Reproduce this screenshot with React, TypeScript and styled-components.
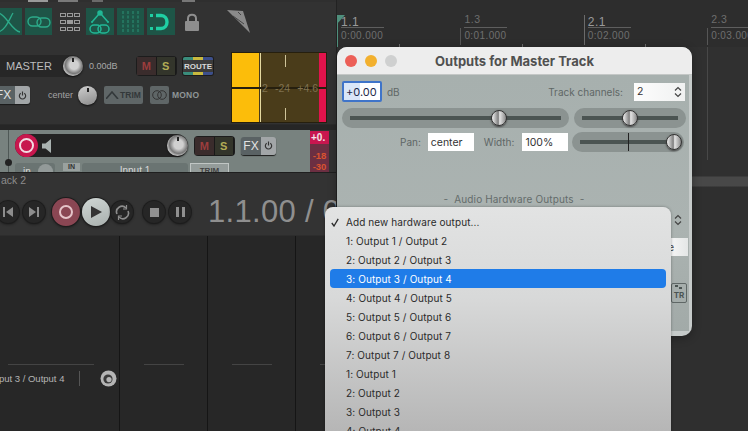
import * as React from "react";
import styled, { createGlobalStyle } from "styled-components";

const Global = createGlobalStyle`
	html, body {
		margin: 0;
		padding: 0;
		background: #2f2f2f;
	}
	* {
		box-sizing: border-box;
	}
`;

const Page = styled.div`
	position: relative;
	width: 748px;
	height: 431px;
	overflow: hidden;
	display: grid;
	grid-template-columns: 337px 1fr;
	background: #2f2f2f;
	font-family: "Liberation Sans", Arial, sans-serif;
`;

const LeftPane = styled.div`
	display: flex;
	flex-direction: column;
	height: 431px;
	overflow: hidden;
	border-right: 1px solid #222;
`;

/* ---------- toolbar ---------- */

const TopStrip = styled.div`
	display: flex;
	height: 2px;
`;

const StripBit = styled.div<{ $w: number; $ml: number; $c: string }>`
	width: ${({ $w }) => $w}px;
	margin-left: ${({ $ml }) => $ml}px;
	background: ${({ $c }) => $c};
`;

const Toolbar = styled.div`
	display: flex;
	align-items: center;
	height: 45px;
	padding: 6px 0 12px;
	background: #323232;
	margin-left: -5px;
	gap: 3px;
`;

const ToolButton = styled.div<{ $active?: boolean; $ml?: number; $w?: number }>`
	width: ${({ $w }) => $w ?? 27}px;
	height: 27px;
	flex: none;
	margin-left: ${({ $ml }) => $ml ?? 0}px;
	display: flex;
	align-items: center;
	justify-content: center;
	background: ${({ $active }) => ($active ? "#1e5547" : "transparent")};
`;

const IconLink = () => (
	<svg width="24" height="14" viewBox="0 0 24 14" fill="none" stroke="#2dab8a" strokeWidth="1.4">
		<rect x="1" y="2" width="13" height="9" rx="4.5" />
		<rect x="10" y="3" width="13" height="9" rx="4.5" />
	</svg>
);

const IconCross = () => (
	<svg width="24" height="24" viewBox="0 0 24 24" fill="none" stroke="#2dab8a" strokeWidth="1.3">
		<path d="M1 3C8 3 15 21 23 22M1 22C8 21 12 10 16 3" />
	</svg>
);

const IconDots = () => (
	<svg width="20" height="18" viewBox="0 0 20 18" fill="none" stroke="#9a9a9a" strokeWidth="1">
		{[0, 7, 14].map((x) =>
			[0, 7, 14].map((y) => (
				<rect
					key={`${x}-${y}`}
					x={x + 0.5}
					y={y + 0.5}
					width="5"
					height="3"
					fill={x === 7 && y === 7 ? "#9a9a9a" : "none"}
				/>
			))
		)}
	</svg>
);

const IconRoute = () => (
	<svg width="24" height="26" viewBox="0 0 24 26" fill="none" stroke="#22b896" strokeWidth="1.5">
		<circle cx="12" cy="4" r="2" fill="#22b896" />
		<path d="M11 5L4 13M13 5L20 13" />
		<rect x="2" y="16" width="11" height="8" rx="4" />
		<rect x="10" y="16" width="11" height="8" rx="4" />
		<path d="M3 13h2M19 13h2" />
	</svg>
);

const IconLines = () => (
	<svg width="20" height="22" viewBox="0 0 20 22" fill="none" stroke="#2a9377" strokeWidth="1" strokeDasharray="3 1.5">
		<path d="M2 0V22M7 0V22M12 0V22M17 0V22" />
	</svg>
);

const IconMagnet = () => (
	<svg width="22" height="20" viewBox="0 0 22 20" fill="none">
		<path d="M6 3.5H11C19 3.5 19 16.5 11 16.5H6" stroke="#1fd0a4" strokeWidth="3.4" />
		<rect x="0" y="2" width="3" height="3" fill="#1fd0a4" />
		<rect x="0" y="15" width="3" height="3" fill="#1fd0a4" />
	</svg>
);

const IconLock = () => (
	<svg width="16" height="18" viewBox="0 0 16 18" fill="none">
		<path d="M4 8V5.5C4 0.5 12 0.5 12 5.5V8" stroke="#8e8e8e" strokeWidth="2" />
		<rect x="1" y="8" width="14" height="10" rx="1" fill="#8e8e8e" />
	</svg>
);

const IconPennant = () => (
	<svg width="24" height="24" viewBox="0 0 24 24">
		<path d="M0 0L16 1L23 23Z" fill="#8a8a8a" />
		<path d="M11 2L14 5M6 6L17 14" stroke="#444" strokeWidth="1" />
	</svg>
);

/* ---------- master panel ---------- */

const MasterPanel = styled.div`
	display: flex;
	height: 78px;
	background: #323232;
	border-bottom: 1px solid #2a2a2a;
`;

const MasterControls = styled.div`
	flex: none;
	width: 231px;
	display: flex;
	flex-direction: column;
	gap: 7px;
	padding-top: 8px;
`;

const ControlRow = styled.div`
	display: flex;
	align-items: center;
	height: 22px;
`;

const NamePill = styled.div`
	flex: none;
	width: 83px;
	height: 22px;
	padding-left: 6px;
	display: flex;
	align-items: center;
	gap: 11px;
	border-radius: 0 11px 11px 0;
	background: #272727;
	color: #bdbdbd;
	font-size: 11px;
`;

const Knob = styled.div<{ $size: number; $dark?: boolean }>`
	flex: none;
	position: relative;
	width: ${({ $size }) => $size}px;
	height: ${({ $size }) => $size}px;
	border-radius: 50%;
	background: ${({ $dark }) =>
		$dark
			? "radial-gradient(circle at 55% 45%, #d0d0d0 0 28%, #787878 55%, #e8e8e8 78%, #222 82%)"
			: "linear-gradient(160deg, #cfcfcf, #8a8a8a)"};
	box-shadow: 0 1px 2px #111;
	&::after {
		content: "";
		position: absolute;
		top: 2px;
		left: 50%;
		width: 2px;
		height: 4px;
		margin-left: -1px;
		background: #222;
	}
`;

const DbLabel = styled.span`
	flex: none;
	width: 28px;
	margin-left: 6px;
	color: #a8a8a8;
	font-size: 9px;
`;

const MuteSolo = styled.div<{ $ml: number }>`
	display: flex;
	flex: none;
	height: 18px;
	margin-left: ${({ $ml }) => $ml}px;
	border-radius: 3px;
	box-shadow: 0 0 0 1px #1c1c1c;
`;

const MuteKey = styled.div<{ $c: string; $bg: string }>`
	width: 19.5px;
	display: flex;
	align-items: center;
	justify-content: center;
	background: ${({ $bg }) => $bg};
	color: ${({ $c }) => $c};
	font-size: 11px;
	font-weight: bold;
	border-right: 1px solid #191919;
`;

const RouteButton = styled.div`
	position: relative;
	flex: none;
	width: 30px;
	height: 18px;
	margin-left: 7px;
	display: flex;
	align-items: center;
	justify-content: center;
	background: linear-gradient(90deg, #3a8d7c 0 33%, #c9b93f 33% 66%, #3c4f8c 66%);
	border-radius: 2px;
	box-shadow: 0 0 0 1px #1c1c1c;
	color: #d8d8d8;
	font-size: 8px;
	font-weight: bold;
	&::before {
		content: "";
		position: absolute;
		left: 0;
		right: 0;
		top: 3px;
		bottom: 3px;
		background: #3b3b3b;
	}
	span {
		position: relative;
	}
`;

const FxGroup = styled.div<{ $ml?: number; $w: number }>`
	flex: none;
	display: flex;
	width: ${({ $w }) => $w}px;
	height: 18px;
	margin-left: ${({ $ml }) => $ml ?? 0}px;
	border-radius: 3px;
	overflow: hidden;
	box-shadow: 0 1px 1px #1a1a1a;
`;

const FxLabel = styled.div`
	flex: 1;
	display: flex;
	align-items: center;
	justify-content: center;
	background: #5a6264;
	color: #e2e2e2;
	font-size: 12px;
`;

const FxPower = styled.div`
	width: 15px;
	display: flex;
	align-items: center;
	justify-content: center;
	background: #a2a6a8;
`;

const IconPower = () => (
	<svg width="9" height="9" viewBox="0 0 10 10" fill="none" stroke="#333" strokeWidth="1.3">
		<path d="M3 2.5A3.5 3.5 0 1 0 7 2.5M5 0.5V5" />
	</svg>
);

const CenterLabel = styled.span`
	flex: none;
	width: 30px;
	margin-left: 18px;
	color: #a4a4a4;
	font-size: 9px;
`;

const TrimButton = styled.div<{ $ml: number }>`
	flex: none;
	width: 39px;
	height: 18px;
	margin-left: ${({ $ml }) => $ml}px;
	display: flex;
	align-items: center;
	justify-content: center;
	gap: 1px;
	background: #5f6667;
	color: #33383a;
	font-size: 8.5px;
	font-weight: bold;
	border-radius: 2px;
`;

const IconTrimPeak = () => (
	<svg width="13" height="8" viewBox="0 0 13 8" fill="none" stroke="#33383a" strokeWidth="1.6">
		<path d="M0 8L6 1L12 8" />
	</svg>
);

const MonoButton = styled.div`
	flex: none;
	width: 19px;
	height: 18px;
	margin-left: 7px;
	display: flex;
	align-items: center;
	justify-content: center;
	background: #5f6667;
	border-radius: 2px;
`;

const IconMono = () => (
	<svg width="15" height="10" viewBox="0 0 15 10" fill="none" stroke="#333" strokeWidth="1">
		<circle cx="5" cy="5" r="4.3" />
		<circle cx="10" cy="5" r="4.3" />
	</svg>
);

const MonoLabel = styled.span`
	margin-left: 3px;
	color: #8f9697;
	font-size: 8.5px;
	font-weight: bold;
	letter-spacing: 0.2px;
`;

const MasterMeter = styled.div`
	position: relative;
	flex: none;
	width: 96px;
	height: 71px;
	margin-top: 5px;
	border: 1px solid #261f0e;
	background: #4a3c1a;
	display: flex;
	flex-direction: column;
	gap: 1px;
`;

const MeterChannel = styled.div`
	flex: 1;
	background: linear-gradient(
		90deg,
		#fcbd0a 0 27px,
		#4a3c1a 27px 28px,
		#e5d9a0 28px 29px,
		#4a3c1a 29px 87px,
		#e2134c 87px 94px
	);
`;

const MeterScale = styled.div`
	position: absolute;
	left: 27px;
	right: 8px;
	top: 29px;
	height: 12px;
	display: flex;
	justify-content: space-between;
	align-items: center;
	padding: 0 0 0 3px;
	color: #7f7150;
	font-size: 10.5px;
	&::before {
		content: "";
		position: absolute;
		left: -27px;
		right: -8px;
		top: 5px;
		height: 2px;
		background: #261f0e;
	}
	span {
		position: relative;
	}
`;

const MeterTick = styled.div<{ $top: boolean }>`
	position: absolute;
	left: 53px;
	width: 1px;
	height: 12px;
	background: #cfc49a;
	${({ $top }) => ($top ? "top: 2px;" : "bottom: 2px;")}
`;

const PanelGap = styled.div`
	height: 5px;
	background: #262626;
`;

/* ---------- track panel ---------- */

const TrackPanel = styled.div`
	position: relative;
	display: flex;
	height: 42px;
	flex: none;
	overflow: hidden;
	background: #323232;
`;

const TrackBody = styled.div`
	flex: none;
	width: 310px;
	padding: 4px 0 0 15px;
	background: linear-gradient(90deg, #78827f 0 8px, #4f5856 8px 9px, #78827f 9px);
	display: flex;
	flex-direction: column;
	gap: 6px;
`;

const TrackRow = styled.div`
	display: flex;
	align-items: center;
	height: 23px;
	flex: none;
`;

const ArmPill = styled.div`
	flex: none;
	width: 173px;
	height: 23px;
	display: flex;
	align-items: center;
	border-radius: 12px;
	background: #232323;
`;

const ArmButton = styled.div`
	flex: none;
	width: 23px;
	height: 23px;
	display: flex;
	align-items: center;
	justify-content: center;
	border-radius: 50%;
	background: #c8174e;
	&::after {
		content: "";
		width: 11px;
		height: 11px;
		border-radius: 50%;
		border: 2px solid #f2dce2;
	}
`;

const SpeakerSlot = styled.div`
	flex: 1;
	padding-left: 4px;
	display: flex;
	align-items: center;
`;

const IconSpeaker = () => (
	<svg width="10" height="14" viewBox="0 0 10 14">
		<path d="M0 4.5H3.5L9 0V14L3.5 9.5H0Z" fill="#a9b2b0" />
	</svg>
);

const InputRow = styled.div`
	display: flex;
	height: 20px;
	flex: none;
	align-items: flex-start;
`;

const InputSelect = styled.div<{ $w: number; $ml?: number }>`
	flex: none;
	position: relative;
	width: ${({ $w }) => $w}px;
	height: 20px;
	margin-left: ${({ $ml }) => $ml ?? 0}px;
	padding: 3px 16px 0 0;
	text-align: center;
	border-radius: 3px;
	background: #6a7472;
	color: #d7d7d7;
	font-size: 10px;
	&::after {
		content: "";
		position: absolute;
		right: 2px;
		top: 1px;
		width: 15px;
		height: 15px;
		border-radius: 50%;
		background: #939a99;
	}
`;

const InTag = styled.div`
	flex: none;
	width: 17px;
	height: 8px;
	margin: 0 0 0 8px;
	background: #99a19f;
	color: #333;
	font-size: 7px;
	font-weight: bold;
	line-height: 8px;
	text-align: center;
`;

const InputName = styled.div`
	flex: none;
	margin-left: 2px;
	height: 20px;
	width: 106px;
	background: #6a7472;
	color: #d7d7d7;
	font-size: 10px;
	text-align: center;
	padding-top: 2px;
	border-radius: 3px;
`;

const TrackTrim = styled.div`
	flex: none;
	width: 39px;
	height: 20px;
	margin-left: 2px;
	background: #949c9a;
	border: 1px solid #c0c6c4;
	color: #444;
	font-size: 8px;
	font-weight: bold;
	padding-top: 2px;
	text-align: center;
`;

const TrackDot = styled.div`
	position: absolute;
	left: 5px;
	top: 29px;
	width: 7px;
	height: 7px;
	border-radius: 50%;
	background: #222;
`;

const TrackMeter = styled.div`
	flex: none;
	width: 19px;
	margin-top: 1px;
	background: #6c2f42;
	display: flex;
	flex-direction: column;
	align-items: center;
	font-size: 9.5px;
	font-weight: bold;
	color: #d9532f;
	overflow: hidden;
	span {
		height: 11px;
		line-height: 11px;
	}
`;

const MeterPeak = styled.div`
	align-self: stretch;
	height: 13px;
	padding-left: 1px;
	background: #c8164f;
	color: #f4e4e8;
	font-size: 10px;
	line-height: 14px;
	margin-bottom: 6px;
	white-space: nowrap;
`;

/* ---------- transport ---------- */

const Transport = styled.div`
	flex: none;
	height: 63px;
	border-top: 1px solid #1f1f1f;
	background: #333;
`;

const TrackCaption = styled.div`
	height: 14px;
	padding-left: 1px;
	color: #8c8c8c;
	font-size: 10.5px;
	line-height: 14px;
`;

const TransportRow = styled.div`
	display: flex;
	align-items: center;
	height: 34px;
	margin: 8px 0 0 -3px;
	white-space: nowrap;
`;

const RoundButton = styled.div<{
	$size: number;
	$ml?: number;
	$bg: string;
}>`
	flex: none;
	width: ${({ $size }) => $size}px;
	height: ${({ $size }) => $size}px;
	margin-left: ${({ $ml }) => $ml ?? 0}px;
	display: flex;
	align-items: center;
	justify-content: center;
	border-radius: 50%;
	background: ${({ $bg }) => $bg};
	box-shadow: 0 0 0 1px #1d1d1d, 0 1px 3px #111;
`;

const RecRing = styled.div`
	width: 14px;
	height: 14px;
	border-radius: 50%;
	border: 2px solid #e5c4c9;
`;

const Clock = styled.div`
	flex: none;
	margin-left: 17px;
	color: #8f8f8f;
	font-size: 31px;
	letter-spacing: 0.3px;
`;

const PrevIcon = () => (
	<svg width="10" height="10" viewBox="0 0 10 10" fill="#8d8d8d">
		<rect x="0" y="0" width="2" height="10" />
		<path d="M10 0V10L3 5Z" />
	</svg>
);

const NextIcon = () => (
	<svg width="10" height="10" viewBox="0 0 10 10" fill="#8d8d8d">
		<rect x="8" y="0" width="2" height="10" />
		<path d="M0 0V10L7 5Z" />
	</svg>
);

const PlayIcon = () => (
	<svg width="11" height="12" viewBox="0 0 11 12" fill="#333">
		<path d="M0 0L11 6L0 12Z" />
	</svg>
);

const RepeatIcon = () => (
	<svg width="15" height="15" viewBox="0 0 15 15" fill="none" stroke="#8d8d8d" strokeWidth="1.6">
		<path d="M2 9A5.5 5.5 0 0 1 11 3M13 6A5.5 5.5 0 0 1 4 12" />
		<path d="M11.5 0V4H8M3.5 15V11H7" strokeWidth="1.2" />
	</svg>
);

const StopIcon = () => (
	<svg width="9" height="9" viewBox="0 0 9 9">
		<rect width="9" height="9" fill="#909090" />
	</svg>
);

const PauseIcon = () => (
	<svg width="9" height="10" viewBox="0 0 9 10" fill="#909090">
		<rect width="3" height="10" />
		<rect x="6" width="3" height="10" />
	</svg>
);

/* ---------- mixer ---------- */

const Mixer = styled.div`
	flex: 1;
	display: flex;
	background: #272727;
	border-top: 1px solid #2d2d2d;
`;

const Strip = styled.div<{ $w: number; $inset: number; $lineW: number }>`
	flex: none;
	width: ${({ $w }) => $w}px;
	padding: 128px 0 0 ${({ $inset }) => $inset}px;
	border-right: 1px solid #151515;
	&::before {
		content: "";
		display: block;
		width: ${({ $lineW }) => $lineW}px;
		height: 1px;
		background: #444;
	}
`;

const StripFooter = styled.div`
	display: flex;
	align-items: center;
	height: 27px;
	margin-left: -17px;
	white-space: nowrap;
	color: #b4b4b4;
	font-size: 9.5px;
`;

const StripDivider = styled.div`
	flex: none;
	width: 1px;
	height: 15px;
	margin-left: 15px;
	background: #555;
`;

const RingIcon = styled.svg`
	flex: none;
	margin-left: 20px;
`;

/* ---------- ruler & arrange ---------- */

const RightPane = styled.div`
	display: flex;
	flex-direction: column;
	height: 431px;
	background: #2f2f2f;
`;

const Ruler = styled.div`
	display: flex;
	flex: none;
	height: 47px;
	background: #2d2d2d;
`;

const RulerCell = styled.div<{ $major: boolean }>`
	position: relative;
	flex: none;
	width: 123.4px;
	height: 47px;
	padding: 15px 0 0 4px;
	color: ${({ $major }) => ($major ? "#9a9a9a" : "#6e6e6e")};
	&::before {
		content: "";
		position: absolute;
		left: 0;
		bottom: 2px;
		width: 1px;
		height: ${({ $major }) => ($major ? 30 : 17)}px;
		background: ${({ $major }) => ($major ? "#6b6b6b" : "#565656")};
	}
	&::after {
		content: "";
		position: absolute;
		left: 61.5px;
		bottom: 0;
		width: 1px;
		height: 3px;
		background: #6b6b6b;
	}
`;

const BarLabel = styled.div<{ $major: boolean }>`
	width: 43px;
	height: 13px;
	border-bottom: 1px solid #5e5e5e;
	font-size: ${({ $major }) => ($major ? 12 : 10.5)}px;
	line-height: ${({ $major }) => ($major ? 14 : 9)}px;
	letter-spacing: 0.5px;
`;

const TimeLabel = styled.div`
	margin-top: 2px;
	color: #6f6f6f;
	font-size: 10px;
	line-height: 12px;
	letter-spacing: 0.4px;
	white-space: nowrap;
`;

const PlayFlag = styled.svg`
	position: absolute;
	left: 0;
	top: 15px;
`;

const Arrange = styled.div`
	position: relative;
	flex: 1;
	background: linear-gradient(
		180deg,
		#303030 0 129px,
		#484848 130px 139px,
		#2f2f2f 140px
	);
	&::before {
		content: "";
		position: absolute;
		left: 370px;
		top: 0;
		width: 1px;
		height: 113px;
		background: #484848;
	}
`;

/* ---------- outputs window ---------- */

const Window = styled.div`
	position: absolute;
	left: 337px;
	top: 47px;
	width: 355px;
	height: 289px;
	border-radius: 10px;
	overflow: hidden;
	display: flex;
	flex-direction: column;
	background: #c6cbca;
	box-shadow: 0 2px 10px rgba(0, 0, 0, 0.3);
`;

const TitleBar = styled.div`
	position: relative;
	flex: none;
	height: 28px;
	display: flex;
	align-items: center;
	justify-content: center;
	background: #ededed;
	border-bottom: 1px solid #c4c7c6;
	color: #505050;
	font-family: Inter, "Liberation Sans", sans-serif;
	font-size: 13px;
	font-weight: 700;
`;

const Lights = styled.div`
	position: absolute;
	left: 8px;
	top: 8px;
	display: flex;
	gap: 8px;
`;

const Light = styled.div<{ $c: string }>`
	width: 12px;
	height: 12px;
	border-radius: 50%;
	background: ${({ $c }) => $c};
`;

const WindowBody = styled.div`
	flex: 1;
	display: flex;
	flex-direction: column;
	margin: 0 3px 5px 0;
	padding: 6px 3px 0 5px;
	background: linear-gradient(180deg, #a7b0ae, #abb3b1 60%, #a2aaa8);
	color: #5f6766;
	font-family: Inter, "Liberation Sans", sans-serif;
	font-size: 10px;
`;

const Row = styled.div<{ $mt?: number; $h: number }>`
	flex: none;
	display: flex;
	align-items: center;
	height: ${({ $h }) => $h}px;
	margin-top: ${({ $mt }) => $mt ?? 0}px;
`;

const VolumeInput = styled.div`
	flex: none;
	width: 40px;
	height: 21px;
	display: flex;
	align-items: center;
	padding-left: 2px;
	background: linear-gradient(90deg, #d9e6f8 0 16px, #fff 16px);
	border: 2px solid #3f74c9;
	border-radius: 2px;
	color: #1d2a4a;
	font-size: 11px;
`;

const FieldLabel = styled.span<{ $ml?: number; $push?: boolean }>`
	margin-left: ${({ $push, $ml }) => ($push ? "auto" : `${$ml ?? 0}px`)};
	white-space: nowrap;
`;

const ChannelSelect = styled.div<{ $w: number; $ml?: number }>`
	flex: none;
	width: ${({ $w }) => $w}px;
	height: 18px;
	margin: 0 1px 0 ${({ $ml }) => $ml ?? 0}px;
	display: flex;
	align-items: center;
	justify-content: space-between;
	padding: 0 3px;
	background: linear-gradient(90deg, #fdfdfd, #f0f1f1);
	color: #333;
	font-size: 10.5px;
`;

const IconUpDown = () => (
	<svg width="8" height="12" viewBox="0 0 8 12" fill="none" stroke="#444" strokeWidth="1.2">
		<path d="M1 4.5L4 1.5L7 4.5M1 7.5L4 10.5L7 7.5" />
	</svg>
);

const SliderTrack = styled.div<{ $w: number; $ml?: number }>`
	position: relative;
	flex: none;
	width: ${({ $w }) => $w}px;
	height: 20px;
	margin-left: ${({ $ml }) => $ml ?? 0}px;
	padding: 0 8px;
	display: flex;
	align-items: center;
	border-radius: 10px;
	background: #8b9391;
	&::before {
		content: "";
		flex: 1;
		height: 4px;
		background: #4b5452;
	}
`;

const SliderThumb = styled.div`
	position: absolute;
	top: 2px;
	width: 16px;
	height: 16px;
	margin-left: -8px;
	border-radius: 50%;
	border: 1px solid #333;
	background: linear-gradient(90deg, #f3f3f3, #7e7e7e 45%, #e4e4e4 55%, #888);
	box-shadow: 0 1px 2px #444;
`;

const CenterMark = styled.div`
	position: absolute;
	left: 56px;
	top: 1px;
	width: 1px;
	height: 18px;
	background: #222;
`;

const TextField = styled.div<{ $ml: number }>`
	flex: none;
	width: 46px;
	height: 18px;
	margin-left: ${({ $ml }) => $ml}px;
	display: flex;
	align-items: center;
	padding-left: 3px;
	background: #fff;
	color: #333;
	font-size: 10.5px;
`;

const SectionHeading = styled.div`
	flex: none;
	margin-top: 40px;
	height: 14px;
	line-height: 14px;
	text-align: center;
	color: #646c6b;
	letter-spacing: 0.15px;
`;

const StepperEnd = styled.div`
	flex: none;
	margin: 0 4px 0 auto;
	display: flex;
	align-items: center;
`;

const HiddenField = styled.div`
	flex: none;
	width: 20px;
	height: 18px;
	margin: 0 -2px 0 auto;
	padding-right: 14px;
	line-height: 18px;
	text-align: right;
	background: linear-gradient(90deg, #f8f8f8, #e4e6e6);
	color: #444;
`;

const MiniTag = styled.div`
	flex: none;
	width: 16px;
	height: 20px;
	margin: 0 -1px 0 auto;
	display: flex;
	flex-direction: column;
	align-items: center;
	border: 1px solid #5f6766;
	border-radius: 2px;
	color: #4b5452;
	font-size: 8px;
	font-weight: bold;
	line-height: 9px;
`;

const IconMiniRoute = () => (
	<svg width="10" height="7" viewBox="0 0 10 7" fill="#4b5452">
		<rect x="1" y="1" width="3" height="2" />
		<rect x="5" y="3" width="3" height="2" />
	</svg>
);

/* ---------- popup menu ---------- */

const Menu = styled.div`
	position: absolute;
	left: 325px;
	top: 207px;
	width: 346px;
	height: 260px;
	padding: 5px;
	border-radius: 8px 8px 0 0;
	background: linear-gradient(180deg, #e2e3e3 0, #d8d9d9 90px, #b6b6b6 224px);
	box-shadow: 0 0 3px rgba(0, 0, 0, 0.35);
	font-family: Inter, "Liberation Sans", sans-serif;
	font-size: 10px;
	letter-spacing: 0.1px;
`;

const MenuItem = styled.div<{ $selected?: boolean }>`
	position: relative;
	height: 19px;
	display: flex;
	align-items: center;
	padding: 1px 0 0 16px;
	border-radius: 4px;
	background: ${({ $selected }) => ($selected ? "#1f7ce8" : "transparent")};
	color: ${({ $selected }) => ($selected ? "#fff" : "#2b2b2b")};
	white-space: nowrap;
`;

const CheckMark = styled.svg`
	position: absolute;
	left: 1px;
	top: 6px;
`;

const menuItems = [
	"Add new hardware output...",
	"1: Output 1 / Output 2",
	"2: Output 2 / Output 3",
	"3: Output 3 / Output 4",
	"4: Output 4 / Output 5",
	"5: Output 5 / Output 6",
	"6: Output 6 / Output 7",
	"7: Output 7 / Output 8",
	"1: Output 1",
	"2: Output 2",
	"3: Output 3",
	"4: Output 4",
];

const rulerCells = [
	{ bar: "1.1", time: "0:00.000", major: true },
	{ bar: "1.3", time: "0:01.000", major: false },
	{ bar: "2.1", time: "0:02.000", major: true },
	{ bar: "2.3", time: "0:03.000", major: false },
];

const App = () => {
	return (
		<>
			<Global />
			<Page>
				<LeftPane>
					<TopStrip>
						<StripBit $w={20} $ml={28} $c="#9a9a9a" />
						<StripBit $w={20} $ml={10} $c="#7a7a7a" />
						<StripBit $w={11} $ml={14} $c="#6a6a6a" />
						<StripBit $w={13} $ml={79} $c="#777" />
					</TopStrip>
					<Toolbar>
						<ToolButton $active>
							<IconCross />
						</ToolButton>
						<ToolButton $active>
							<IconLink />
						</ToolButton>
						<ToolButton $ml={3} $w={24}>
							<IconDots />
						</ToolButton>
						<ToolButton $active $ml={1} $w={28}>
							<IconRoute />
						</ToolButton>
						<ToolButton $active>
							<IconLines />
						</ToolButton>
						<ToolButton $active $w={28}>
							<IconMagnet />
						</ToolButton>
						<ToolButton $ml={5} $w={18}>
							<IconLock />
						</ToolButton>
						<ToolButton $ml={23} $w={24}>
							<IconPennant />
						</ToolButton>
					</Toolbar>

					<MasterPanel>
						<MasterControls>
							<ControlRow>
								<NamePill>
									MASTER
									<Knob $size={20} $dark />
								</NamePill>
								<DbLabel>0.00dB</DbLabel>
								<MuteSolo $ml={20}>
									<MuteKey $c="#9c3d3d" $bg="#3a2c2c">M</MuteKey>
									<MuteKey $c="#b3ad55" $bg="#33352b">S</MuteKey>
								</MuteSolo>
								<RouteButton>
									<span>ROUTE</span>
								</RouteButton>
							</ControlRow>
							<ControlRow>
								<FxGroup $w={38} $ml={-8}>
									<FxLabel>FX</FxLabel>
									<FxPower>
										<IconPower />
									</FxPower>
								</FxGroup>
								<CenterLabel>center</CenterLabel>
								<Knob $size={19} />
								<TrimButton $ml={7}>
									<IconTrimPeak />
									TRIM
								</TrimButton>
								<MonoButton>
									<IconMono />
								</MonoButton>
								<MonoLabel>MONO</MonoLabel>
							</ControlRow>
						</MasterControls>
						<MasterMeter>
							<MeterChannel />
							<MeterChannel />
							<MeterTick $top />
							<MeterTick $top={false} />
							<MeterScale>
								<span>2</span>
								<span>-24</span>
								<span>+4.6</span>
							</MeterScale>
						</MasterMeter>
					</MasterPanel>
					<PanelGap />

					<TrackPanel>
						<TrackBody>
							<TrackRow>
								<ArmPill>
									<ArmButton />
									<SpeakerSlot>
										<IconSpeaker />
									</SpeakerSlot>
									<Knob $size={21} $dark />
								</ArmPill>
								<MuteSolo $ml={7}>
									<MuteKey $c="#9c3d3d" $bg="#3a2c2c">M</MuteKey>
									<MuteKey $c="#b3ad55" $bg="#33352b">S</MuteKey>
								</MuteSolo>
								<FxGroup $w={35} $ml={7}>
									<FxLabel>FX</FxLabel>
									<FxPower>
										<IconPower />
									</FxPower>
								</FxGroup>
							</TrackRow>
							<InputRow>
								<InputSelect $w={40}>in</InputSelect>
								<InTag>IN</InTag>
								<InputName>Input 1</InputName>
								<TrackTrim>TRIM</TrackTrim>
							</InputRow>
						</TrackBody>
						<TrackDot />
						<TrackMeter>
							<MeterPeak>+0.</MeterPeak>
							<span>-18</span>
							<span>-30</span>
						</TrackMeter>
					</TrackPanel>

					<Transport>
						<TrackCaption>ack 2</TrackCaption>
						<TransportRow>
							<RoundButton $size={22} $bg="#262626">
								<PrevIcon />
							</RoundButton>
							<RoundButton $size={22} $ml={4} $bg="#262626">
								<NextIcon />
							</RoundButton>
							<RoundButton $size={28} $ml={7} $bg="#8a4653">
								<RecRing />
							</RoundButton>
							<RoundButton $size={28} $ml={2} $bg="linear-gradient(160deg, #cfd6d4, #a9b0ae)">
								<PlayIcon />
							</RoundButton>
							<RoundButton $size={22} $ml={1} $bg="#262626">
								<RepeatIcon />
							</RoundButton>
							<RoundButton $size={22} $ml={10} $bg="#262626">
								<StopIcon />
							</RoundButton>
							<RoundButton $size={22} $ml={4} $bg="#262626">
								<PauseIcon />
							</RoundButton>
							<Clock>1.1.00 / 0:00.000</Clock>
						</TransportRow>
					</Transport>

					<Mixer>
						<Strip $w={120} $inset={8} $lineW={86}>
							<StripFooter>
								utput 3 / Output 4
								<StripDivider />
								<RingIcon width="17" height="17" viewBox="0 0 17 17">
									<circle cx="8.5" cy="8.5" r="8" fill="#b4b4b4" />
									<circle cx="8" cy="9" r="4.6" fill="#3a3a3a" />
									<circle cx="9" cy="9.6" r="2.6" fill="#b4b4b4" />
								</RingIcon>
							</StripFooter>
						</Strip>
						<Strip $w={88} $inset={24} $lineW={40} />
						<Strip $w={88} $inset={24} $lineW={40} />
						<Strip $w={40} $inset={24} $lineW={5} />
					</Mixer>
				</LeftPane>

				<RightPane>
					<Ruler>
						{rulerCells.map((cell, i) => (
							<RulerCell key={cell.bar} $major={cell.major}>
								{i === 0 && (
									<PlayFlag width="9" height="32" viewBox="0 0 9 32">
										<path d="M0 0H8L0 9Z" fill="#4f8f7c" />
										<rect width="1" height="32" fill="#4f8f7c" />
									</PlayFlag>
								)}
								<BarLabel $major={cell.major}>{cell.bar}</BarLabel>
								<TimeLabel>{cell.time}</TimeLabel>
							</RulerCell>
						))}
					</Ruler>
					<Arrange />
				</RightPane>

				<Window>
					<TitleBar>
						<Lights>
							<Light $c="#ec5f57" />
							<Light $c="#f2b02e" />
							<Light $c="#cfd0d0" />
						</Lights>
						Outputs for Master Track
					</TitleBar>
					<WindowBody>
						<Row $h={21}>
							<VolumeInput>+0.00</VolumeInput>
							<FieldLabel $ml={5}>dB</FieldLabel>
							<FieldLabel $push>Track channels:</FieldLabel>
							<ChannelSelect $w={51} $ml={11}>
								2
								<IconUpDown />
							</ChannelSelect>
						</Row>
						<Row $h={20} $mt={6}>
							<SliderTrack $w={227}>
								<SliderThumb style={{ left: "69%" }} />
							</SliderTrack>
							<SliderTrack $w={112} $ml={5}>
								<SliderThumb style={{ left: "50%" }} />
							</SliderTrack>
						</Row>
						<Row $h={20} $mt={4}>
							<FieldLabel $ml={58}>Pan:</FieldLabel>
							<TextField $ml={7}>center</TextField>
							<FieldLabel $ml={10}>Width:</FieldLabel>
							<TextField $ml={8}>100%</TextField>
							<SliderTrack $w={112} $ml={4}>
								<CenterMark />
								<SliderThumb style={{ left: "91%" }} />
							</SliderTrack>
						</Row>
						<SectionHeading>- &nbsp;Audio Hardware Outputs&nbsp; -</SectionHeading>
						<Row $h={18} $mt={5}>
							<StepperEnd>
								<IconUpDown />
							</StepperEnd>
						</Row>
						<Row $h={18} $mt={9}>
							<HiddenField>e</HiddenField>
						</Row>
						<Row $h={20} $mt={27}>
							<MiniTag>
								<IconMiniRoute />
								TR
							</MiniTag>
						</Row>
					</WindowBody>
				</Window>

				<Menu>
					{menuItems.map((item, i) => (
						<MenuItem key={`${item}-${i}`} $selected={i === 3}>
							{i === 0 && (
								<CheckMark width="8" height="9" viewBox="0 0 8 9" fill="none" stroke="#2b2b2b" strokeWidth="1.3">
									<path d="M0.8 5L3 8L7.2 0.8" />
								</CheckMark>
							)}
							{item}
						</MenuItem>
					))}
				</Menu>
			</Page>
		</>
	);
};

export default App;
